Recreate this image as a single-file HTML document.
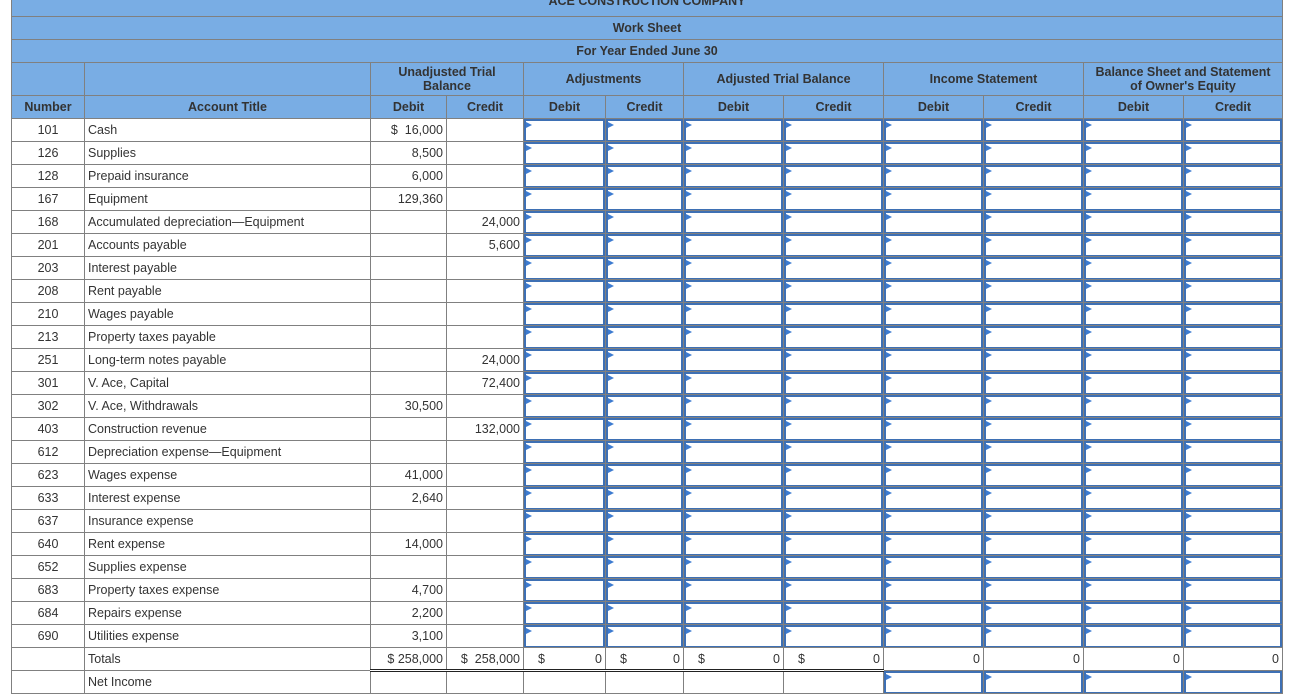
<!DOCTYPE html>
<html><head><meta charset="utf-8"><style>
html,body{margin:0;padding:0;background:#fff;width:1302px;height:699px;overflow:hidden}
table{position:absolute;left:11px;top:-5px;border-collapse:collapse;table-layout:fixed;font-family:"Liberation Sans",Arial,sans-serif;font-size:12.5px;color:#333}
td{border:1px solid #808080;padding:0 3px;white-space:nowrap;overflow:hidden;line-height:14px}
tr{height:23px}
.h td{background:#79ade4;text-align:center;color:#333;font-weight:bold}
.n{text-align:center}
.r{text-align:right}
td.i{position:relative;padding:0}
td.i b{position:absolute;left:0;top:0;right:0;bottom:-1px;border:2px solid #3e70b4}
td.i b:after{content:"";position:absolute;left:0;top:1px;border-left:6px solid #3d7bd0;border-top:3px solid transparent;border-bottom:3px solid transparent}
.d{display:flex;justify-content:space-between}
.tot td.u{border-bottom:3px double #222}
</style></head><body>
<table>
<colgroup><col style="width:73px"><col style="width:286px"><col style="width:76px"><col style="width:77px"><col style="width:82px"><col style="width:78px"><col style="width:100px"><col style="width:100px"><col style="width:100px"><col style="width:100px"><col style="width:100px"><col style="width:99px"></colgroup>
<tr class="h" style="height:21px"><td colspan="12" style="vertical-align:top;line-height:10px">ACE CONSTRUCTION COMPANY</td></tr>
<tr class="h"><td colspan="12">Work Sheet</td></tr>
<tr class="h"><td colspan="12">For Year Ended June 30</td></tr>
<tr class="h" style="height:33px"><td></td><td></td><td colspan="2" style="line-height:14px">Unadjusted Trial<br>Balance</td><td colspan="2">Adjustments</td><td colspan="2">Adjusted Trial Balance</td><td colspan="2">Income Statement</td><td colspan="2" style="line-height:14px">Balance Sheet and Statement<br>of Owner's Equity</td></tr>
<tr class="h"><td>Number</td><td>Account Title</td><td>Debit</td><td>Credit</td><td>Debit</td><td>Credit</td><td>Debit</td><td>Credit</td><td>Debit</td><td>Credit</td><td>Debit</td><td>Credit</td></tr>
<tr><td class="n">101</td><td>Cash</td><td class="r">$&nbsp; 16,000</td><td></td><td class="i"><b></b></td><td class="i"><b></b></td><td class="i"><b></b></td><td class="i"><b></b></td><td class="i"><b></b></td><td class="i"><b></b></td><td class="i"><b></b></td><td class="i"><b></b></td></tr>
<tr><td class="n">126</td><td>Supplies</td><td class="r">8,500</td><td></td><td class="i"><b></b></td><td class="i"><b></b></td><td class="i"><b></b></td><td class="i"><b></b></td><td class="i"><b></b></td><td class="i"><b></b></td><td class="i"><b></b></td><td class="i"><b></b></td></tr>
<tr><td class="n">128</td><td>Prepaid insurance</td><td class="r">6,000</td><td></td><td class="i"><b></b></td><td class="i"><b></b></td><td class="i"><b></b></td><td class="i"><b></b></td><td class="i"><b></b></td><td class="i"><b></b></td><td class="i"><b></b></td><td class="i"><b></b></td></tr>
<tr><td class="n">167</td><td>Equipment</td><td class="r">129,360</td><td></td><td class="i"><b></b></td><td class="i"><b></b></td><td class="i"><b></b></td><td class="i"><b></b></td><td class="i"><b></b></td><td class="i"><b></b></td><td class="i"><b></b></td><td class="i"><b></b></td></tr>
<tr><td class="n">168</td><td>Accumulated depreciation—Equipment</td><td></td><td class="r">24,000</td><td class="i"><b></b></td><td class="i"><b></b></td><td class="i"><b></b></td><td class="i"><b></b></td><td class="i"><b></b></td><td class="i"><b></b></td><td class="i"><b></b></td><td class="i"><b></b></td></tr>
<tr><td class="n">201</td><td>Accounts payable</td><td></td><td class="r">5,600</td><td class="i"><b></b></td><td class="i"><b></b></td><td class="i"><b></b></td><td class="i"><b></b></td><td class="i"><b></b></td><td class="i"><b></b></td><td class="i"><b></b></td><td class="i"><b></b></td></tr>
<tr><td class="n">203</td><td>Interest payable</td><td></td><td></td><td class="i"><b></b></td><td class="i"><b></b></td><td class="i"><b></b></td><td class="i"><b></b></td><td class="i"><b></b></td><td class="i"><b></b></td><td class="i"><b></b></td><td class="i"><b></b></td></tr>
<tr><td class="n">208</td><td>Rent payable</td><td></td><td></td><td class="i"><b></b></td><td class="i"><b></b></td><td class="i"><b></b></td><td class="i"><b></b></td><td class="i"><b></b></td><td class="i"><b></b></td><td class="i"><b></b></td><td class="i"><b></b></td></tr>
<tr><td class="n">210</td><td>Wages payable</td><td></td><td></td><td class="i"><b></b></td><td class="i"><b></b></td><td class="i"><b></b></td><td class="i"><b></b></td><td class="i"><b></b></td><td class="i"><b></b></td><td class="i"><b></b></td><td class="i"><b></b></td></tr>
<tr><td class="n">213</td><td>Property taxes payable</td><td></td><td></td><td class="i"><b></b></td><td class="i"><b></b></td><td class="i"><b></b></td><td class="i"><b></b></td><td class="i"><b></b></td><td class="i"><b></b></td><td class="i"><b></b></td><td class="i"><b></b></td></tr>
<tr><td class="n">251</td><td>Long-term notes payable</td><td></td><td class="r">24,000</td><td class="i"><b></b></td><td class="i"><b></b></td><td class="i"><b></b></td><td class="i"><b></b></td><td class="i"><b></b></td><td class="i"><b></b></td><td class="i"><b></b></td><td class="i"><b></b></td></tr>
<tr><td class="n">301</td><td>V. Ace, Capital</td><td></td><td class="r">72,400</td><td class="i"><b></b></td><td class="i"><b></b></td><td class="i"><b></b></td><td class="i"><b></b></td><td class="i"><b></b></td><td class="i"><b></b></td><td class="i"><b></b></td><td class="i"><b></b></td></tr>
<tr><td class="n">302</td><td>V. Ace, Withdrawals</td><td class="r">30,500</td><td></td><td class="i"><b></b></td><td class="i"><b></b></td><td class="i"><b></b></td><td class="i"><b></b></td><td class="i"><b></b></td><td class="i"><b></b></td><td class="i"><b></b></td><td class="i"><b></b></td></tr>
<tr><td class="n">403</td><td>Construction revenue</td><td></td><td class="r">132,000</td><td class="i"><b></b></td><td class="i"><b></b></td><td class="i"><b></b></td><td class="i"><b></b></td><td class="i"><b></b></td><td class="i"><b></b></td><td class="i"><b></b></td><td class="i"><b></b></td></tr>
<tr><td class="n">612</td><td>Depreciation expense—Equipment</td><td></td><td></td><td class="i"><b></b></td><td class="i"><b></b></td><td class="i"><b></b></td><td class="i"><b></b></td><td class="i"><b></b></td><td class="i"><b></b></td><td class="i"><b></b></td><td class="i"><b></b></td></tr>
<tr><td class="n">623</td><td>Wages expense</td><td class="r">41,000</td><td></td><td class="i"><b></b></td><td class="i"><b></b></td><td class="i"><b></b></td><td class="i"><b></b></td><td class="i"><b></b></td><td class="i"><b></b></td><td class="i"><b></b></td><td class="i"><b></b></td></tr>
<tr><td class="n">633</td><td>Interest expense</td><td class="r">2,640</td><td></td><td class="i"><b></b></td><td class="i"><b></b></td><td class="i"><b></b></td><td class="i"><b></b></td><td class="i"><b></b></td><td class="i"><b></b></td><td class="i"><b></b></td><td class="i"><b></b></td></tr>
<tr><td class="n">637</td><td>Insurance expense</td><td></td><td></td><td class="i"><b></b></td><td class="i"><b></b></td><td class="i"><b></b></td><td class="i"><b></b></td><td class="i"><b></b></td><td class="i"><b></b></td><td class="i"><b></b></td><td class="i"><b></b></td></tr>
<tr><td class="n">640</td><td>Rent expense</td><td class="r">14,000</td><td></td><td class="i"><b></b></td><td class="i"><b></b></td><td class="i"><b></b></td><td class="i"><b></b></td><td class="i"><b></b></td><td class="i"><b></b></td><td class="i"><b></b></td><td class="i"><b></b></td></tr>
<tr><td class="n">652</td><td>Supplies expense</td><td></td><td></td><td class="i"><b></b></td><td class="i"><b></b></td><td class="i"><b></b></td><td class="i"><b></b></td><td class="i"><b></b></td><td class="i"><b></b></td><td class="i"><b></b></td><td class="i"><b></b></td></tr>
<tr><td class="n">683</td><td>Property taxes expense</td><td class="r">4,700</td><td></td><td class="i"><b></b></td><td class="i"><b></b></td><td class="i"><b></b></td><td class="i"><b></b></td><td class="i"><b></b></td><td class="i"><b></b></td><td class="i"><b></b></td><td class="i"><b></b></td></tr>
<tr><td class="n">684</td><td>Repairs expense</td><td class="r">2,200</td><td></td><td class="i"><b></b></td><td class="i"><b></b></td><td class="i"><b></b></td><td class="i"><b></b></td><td class="i"><b></b></td><td class="i"><b></b></td><td class="i"><b></b></td><td class="i"><b></b></td></tr>
<tr><td class="n">690</td><td>Utilities expense</td><td class="r">3,100</td><td></td><td class="i"><b></b></td><td class="i"><b></b></td><td class="i"><b></b></td><td class="i"><b></b></td><td class="i"><b></b></td><td class="i"><b></b></td><td class="i"><b></b></td><td class="i"><b></b></td></tr>
<tr class="tot"><td></td><td>Totals</td><td class="u r">$ 258,000</td><td class="u r">$&nbsp; 258,000</td><td class="u" style="padding-left:14px"><div class="d"><span>$</span><span>0</span></div></td><td class="u" style="padding-left:14px"><div class="d"><span>$</span><span>0</span></div></td><td class="u" style="padding-left:14px"><div class="d"><span>$</span><span>0</span></div></td><td class="u" style="padding-left:14px"><div class="d"><span>$</span><span>0</span></div></td><td class="r">0</td><td class="r">0</td><td class="r">0</td><td class="r">0</td></tr>
<tr><td></td><td>Net Income</td><td></td><td></td><td></td><td></td><td></td><td></td><td class="i"><b></b></td><td class="i"><b></b></td><td class="i"><b></b></td><td class="i"><b></b></td></tr>
</table>
</body></html>
